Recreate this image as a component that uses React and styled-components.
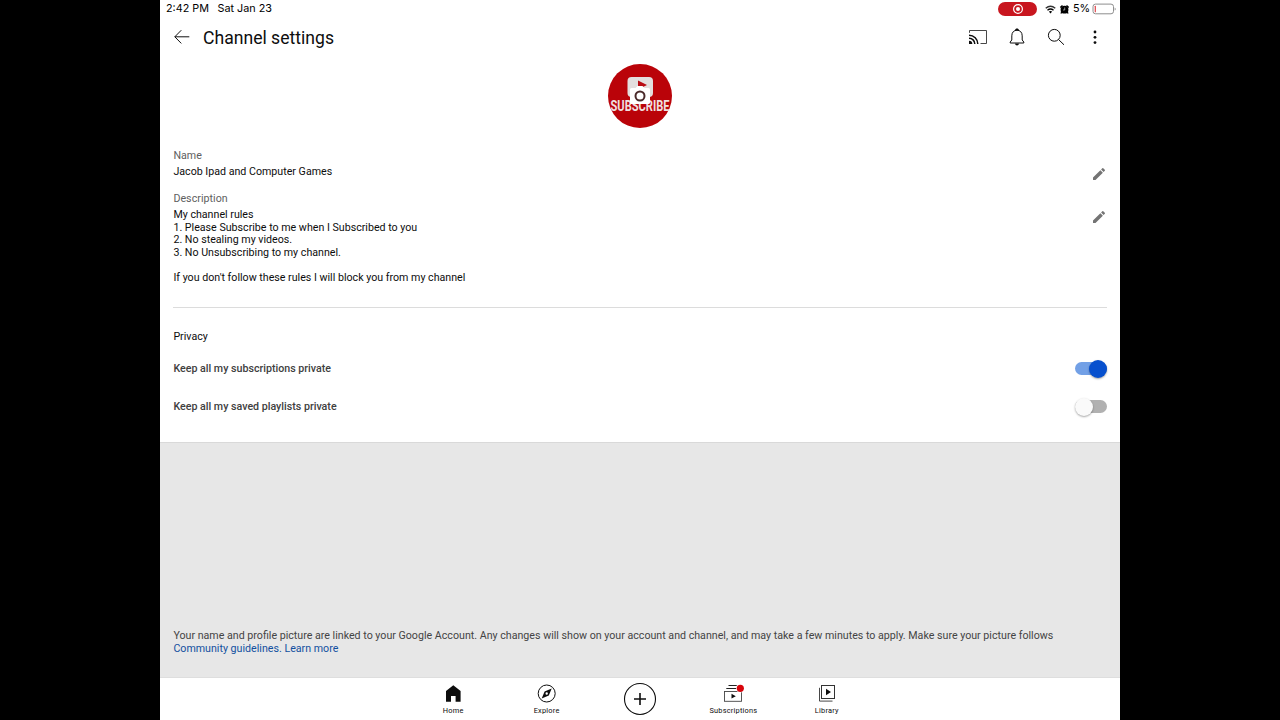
import React from "react";
import styled, { createGlobalStyle } from "styled-components";

const GlobalStyle = createGlobalStyle`
  * { box-sizing: border-box; }
  body { margin: 0; background: #000; font-family: Roboto, "Liberation Sans", sans-serif; }
  svg { display: block; flex: none; overflow: visible; }
`;

const Stage = styled.div`
  width: 1280px;
  height: 720px;
  display: flex;
  justify-content: center;
  background: #000;
  overflow: hidden;
`;

const Tablet = styled.main`
  width: 960px;
  height: 720px;
  display: flex;
  flex-direction: column;
  background: #fff;
  color: #0d0d0d;
`;

const StatusBar = styled.div`
  height: 18px;
  flex: none;
  display: flex;
  align-items: center;
  padding: 0 4px 0 6px;
  font-family: Inter, Roboto, sans-serif;
  font-size: 10.8px;
  line-height: 18px;
  color: #000;
`;

const StatusText = styled.span`
  width: ${(p) => p.$width}px;
  white-space: nowrap;
  letter-spacing: ${(p) => p.$spacing || 0}px;
`;

const Spacer = styled.div`
  flex: 1;
`;

const RecordPill = styled.div`
  width: 39px;
  height: 14px;
  margin-right: 8px;
  border-radius: 7px;
  background: #c8161f;
  display: flex;
  align-items: center;
  justify-content: center;
`;

const StatusIcons = styled.div`
  display: flex;
  align-items: center;
  gap: 4px;
`;

const Header = styled.header`
  height: 38px;
  flex: none;
  display: flex;
  align-items: center;
  padding: 0 15px 0 14px;
`;

const Title = styled.h1`
  margin: 0 0 0 13px;
  padding-top: 1px;
  flex: 1;
  font-size: 17.6px;
  line-height: 24px;
  font-weight: 400;
`;

const HeaderActions = styled.div`
  display: flex;
  align-items: center;
  gap: 19px;
`;

const AvatarRow = styled.div`
  height: 92px;
  flex: none;
  padding-top: 8px;
  display: flex;
  justify-content: center;
`;

const Field = styled.section`
  display: flex;
  justify-content: space-between;
  height: ${(p) => p.$height}px;
  flex: none;
  padding: 0 13.5px 0 13.4px;
`;

const FieldLabel = styled.div`
  font-size: 10.67px;
  line-height: 15px;
  color: #606060;
  letter-spacing: 0.04px;
`;

const FieldValue = styled.div`
  margin-top: 3px;
  font-size: 10.67px;
  line-height: 12.5px;
  white-space: pre-line;
`;

const EditButton = styled.button`
  width: 16px;
  height: 16px;
  margin-top: 18px;
  padding: 0;
  border: 0;
  background: none;
`;

const Divider = styled.hr`
  height: 1.500px;
  width: 934px;
  flex: none;
  margin: 0 0 0 13px;
  border: 0;
  background: #dcdcdc;
`;

const SectionTitle = styled.h2`
  margin: 21px 0 5.500px;
  padding-left: 13.4px;
  font-size: 10.67px;
  line-height: 15px;
  font-weight: 400;
`;

const ToggleRow = styled.div`
  height: 38px;
  flex: none;
  display: flex;
  align-items: center;
  justify-content: space-between;
  padding: 0 13px 0 13.4px;
`;

const ToggleLabel = styled.span`
  font-size: 10.67px;
  font-weight: 500;
  line-height: 15px;
  color: #404040;
`;

const Track = styled.button`
  width: 32px;
  height: 13px;
  padding: 0;
  border: 0;
  border-radius: 7px;
  display: flex;
  align-items: center;
  justify-content: ${(p) => (p.$on ? "flex-end" : "flex-start")};
  background: ${(p) => (p.$on ? "#72a0e6" : "#b1b1b1")};
`;

const Knob = styled.span`
  width: 18px;
  height: 18px;
  flex: none;
  border-radius: 50%;
  background: ${(p) => (p.$on ? "#0750ce" : "#fafafa")};
  box-shadow: 0 1px 2px rgba(0, 0, 0, 0.35);
`;

const Footer = styled.section`
  flex: 1;
  margin-top: 16px;
  border-top: 1px solid #d9d9d9;
  border-bottom: 1px solid #dedede;
  background: #e7e7e7;
  display: flex;
  align-items: flex-end;
  padding: 0 13px 22px 13.4px;
`;

const Notice = styled.p`
  margin: 0;
  font-size: 10.67px;
  line-height: 12.5px;
  color: #444;
`;

const Link = styled.span`
  color: #12509f;
`;

const TabBar = styled.nav`
  height: 42px;
  flex: none;
  display: flex;
  justify-content: center;
`;

const Tab = styled.div`
  width: 93.4px;
  display: flex;
  flex-direction: column;
  align-items: center;
  padding-top: ${(p) => (p.$large ? 5 : 6)}px;
`;

const TabLabel = styled.span`
  margin-top: 2px;
  font-size: 7.4px;
  line-height: 9px;
  letter-spacing: 0.22px;
`;

const Avatar = () => (
  <svg width="64" height="64" viewBox="0 0 64 64">
    <circle cx="32" cy="32" r="32" fill="#ba0309" />
    <rect x="19.5" y="13" width="25.5" height="20" rx="4" fill="#e3dede" />
    <path d="M30 16.500v9l9-4.500z" fill="#b90b13" />
    <text x="2.500" y="47" textLength="59" lengthAdjust="spacingAndGlyphs" fontFamily="Roboto, sans-serif" fontWeight="700" fontSize="14.500" fill="#f0e0e0">SUBSCRIBE</text>
    <path d="M23.500 24h4l2-2h5l2 2h4q1.500 0 1.500 1.500v13q0 1.500-1.500 1.500h-17q-1.500 0-1.500-1.500v-13q0-1.500 1.500-1.500z" fill="#fff" />
    <circle cx="32" cy="32" r="4.500" fill="#fff" stroke="#4a2a2a" strokeWidth="2" />
  </svg>
);

const BackIcon = () => (
  <svg width="16" height="16" viewBox="0 0 16 16" fill="none" stroke="#111" strokeWidth="1">
    <path d="M15.300 7.800H.8M7.300 1.200.8 7.800l6.500 6.600" />
  </svg>
);

const CastIcon = () => (
  <svg width="20" height="18" viewBox="0 0 20 18" fill="none" stroke="#0d0d0d">
    <path d="M1.500 4.800V2.500h17v13h-6" strokeWidth=".9" stroke="#333" />
    <path d="M1 7.200a8.800 8.800 0 0 1 8.800 8.800M1 10.200a5.800 5.800 0 0 1 5.800 5.800" strokeWidth="1.500" />
    <path d="M1 12.700a3.300 3.300 0 0 1 3.300 3.300H1z" fill="#0d0d0d" stroke="none" />
  </svg>
);

const BellIcon = () => (
  <svg width="20" height="20" viewBox="0 0 20 20" fill="none" stroke="#0d0d0d" strokeWidth="1">
    <path d="M3.200 16v-1l1.600-2V8.800C4.800 5.300 7 3.200 10 3.200s5.200 2.100 5.200 5.600V13l1.600 2v1z" />
    <path d="M8 3.500C8.200.9 11.800.9 12 3.500zM8 16.500h4c-.2 2.600-3.800 2.600-4 0z" fill="#0d0d0d" stroke="none" />
  </svg>
);

const SearchIcon = () => (
  <svg width="20" height="20" viewBox="0 0 20 20" fill="none" stroke="#0d0d0d" strokeWidth="1">
    <circle cx="8.300" cy="8.300" r="5.900" />
    <path d="m12.500 12.500 5.500 5.300" />
  </svg>
);

const MoreIcon = () => (
  <svg width="20" height="20" viewBox="0 0 20 20" fill="#0d0d0d">
    <circle cx="10" cy="5" r="1.400" />
    <circle cx="10" cy="10.300" r="1.400" />
    <circle cx="10" cy="15.600" r="1.400" />
  </svg>
);

const PencilIcon = () => (
  <svg width="16" height="16" viewBox="0 0 24 24" fill="#747474">
    <path d="M3 17.250V21h3.750L17.810 9.940l-3.750-3.750L3 17.250zM20.710 7.040a1 1 0 0 0 0-1.410l-2.340-2.340a1 1 0 0 0-1.410 0l-1.830 1.830 3.750 3.750 1.830-1.830z" />
  </svg>
);

const RecordIcon = () => (
  <svg width="10" height="10" viewBox="0 0 10 10">
    <circle cx="5" cy="5" r="4.400" fill="none" stroke="#fff" strokeWidth="1.200" />
    <circle cx="5" cy="5" r="2" fill="#fff" />
  </svg>
);

const WifiIcon = () => (
  <svg width="11" height="9" viewBox="0 0 12 9" fill="none" stroke="#000" strokeWidth="1.500">
    <path d="M.8 3.200Q6-1.200 11.200 3.200" stroke="#333" />
    <path d="M2.700 5.300Q6 2.600 9.300 5.300" />
    <path d="M4.200 6.800Q6 5.600 7.800 6.800L6 8.800z" fill="#000" stroke="none" />
  </svg>
);

const AlarmIcon = () => (
  <svg width="9" height="9" viewBox="0 0 9 9">
    <path d="M.3 2.500 2.500.4M8.700 2.500 6.500.4M1.800 7 .9 8.500M7.200 7l.9 1.500" stroke="#000" strokeWidth="1.400" />
    <circle cx="4.500" cy="4.700" r="3.900" fill="#000" />
    <path d="M4.700 2.500v2.500H3" fill="none" stroke="#ccc" strokeWidth=".7" />
  </svg>
);

const BatteryIcon = () => (
  <svg width="23" height="10" viewBox="0 0 23 10">
    <rect x="0" y=".1" width="20.500" height="9.700" rx="2.500" fill="none" stroke="#8e8e8e" />
    <path d="M21.700 3.500q1 .5 1 1.500t-1 1.500z" fill="#8e8e8e" />
    <rect x="1.700" y="1.800" width="1.200" height="6.400" rx=".5" fill="#e0474c" />
  </svg>
);

const HomeIcon = () => (
  <svg width="20" height="20" viewBox="0 0 20 20" fill="#0d0d0d">
    <path d="m10.300 1.300 7.300 5.800v10.600h-5v-5.800H8v5.800H3V7.100z" />
  </svg>
);

const ExploreIcon = () => (
  <svg width="20" height="20" viewBox="0 0 20 20">
    <circle cx="9.700" cy="9.500" r="8.500" fill="none" stroke="#0d0d0d" />
    <path fillRule="evenodd" d="m14.700 4.500-2.900 7.100-7.100 2.900 2.900-7.100zM9.700 8.300a1.200 1.200 0 1 0 0 2.400 1.200 1.200 0 0 0 0-2.400z" fill="#0d0d0d" />
  </svg>
);

const CreateIcon = () => (
  <svg width="32" height="32" viewBox="0 0 32 32" fill="none" stroke="#0d0d0d">
    <circle cx="16" cy="16" r="15.500" strokeWidth="1.100" />
    <path d="M16 10v12M10 16h12" strokeWidth="1.600" />
  </svg>
);

const SubscriptionsIcon = () => (
  <svg width="20" height="20" viewBox="0 0 20 20">
    <path d="M5.500 1.500h9M3.300 4.500h13" stroke="#222" strokeWidth="1.100" />
    <rect x="1.500" y="7.500" width="17" height="9.800" fill="#fff" stroke="#444" strokeWidth=".9" />
    <path d="M8.500 9.800v4.800l4.300-2.400z" fill="#0d0d0d" />
    <circle cx="17.300" cy="4.300" r="4.300" fill="#fff" />
    <circle cx="17.300" cy="4.300" r="3.600" fill="#d8040b" />
  </svg>
);

const LibraryIcon = () => (
  <svg width="20" height="20" viewBox="0 0 20 20" fill="none" stroke="#333">
    <rect x="4.500" y="1.500" width="13" height="13" />
    <path d="M2.500 3.800v13.300h13" strokeWidth=".9" />
    <path d="M9 4.800v6.500l5-3.250z" fill="#0d0d0d" stroke="none" />
  </svg>
);

const tabs = [
  { label: "Home", Icon: HomeIcon },
  { label: "Explore", Icon: ExploreIcon },
  { Icon: CreateIcon },
  { label: "Subscriptions", Icon: SubscriptionsIcon },
  { label: "Library", Icon: LibraryIcon },
];

const description = `My channel rules
1. Please Subscribe to me when I Subscribed to you
2. No stealing my videos.
3. No Unsubscribing to my channel.

If you don't follow these rules I will block you from my channel`;

function Toggle({ label, on }) {
  return (
    <ToggleRow>
      <ToggleLabel>{label}</ToggleLabel>
      <Track $on={on} role="switch" aria-checked={on} aria-label={label}>
        <Knob $on={on} />
      </Track>
    </ToggleRow>
  );
}

function EditableField({ label, value, height }) {
  return (
    <Field $height={height}>
      <div>
        <FieldLabel>{label}</FieldLabel>
        <FieldValue>{value}</FieldValue>
      </div>
      <EditButton aria-label={"Edit " + label}>
        <PencilIcon />
      </EditButton>
    </Field>
  );
}

export default function App() {
  return (
    <Stage>
      <GlobalStyle />
      <Tablet>
        <StatusBar>
          <StatusText $width={51.5}>2:42 PM</StatusText>
          <StatusText $width={60}>Sat Jan 23</StatusText>
          <Spacer />
          <RecordPill><RecordIcon /></RecordPill>
          <StatusIcons>
            <WifiIcon />
            <AlarmIcon />
            <StatusText $width={16}>5%</StatusText>
            <BatteryIcon />
          </StatusIcons>
        </StatusBar>
        <Header>
          <BackIcon />
          <Title>Channel settings</Title>
          <HeaderActions>
            <CastIcon />
            <BellIcon />
            <SearchIcon />
            <MoreIcon />
          </HeaderActions>
        </Header>
        <AvatarRow><Avatar /></AvatarRow>
        <EditableField label="Name" value="Jacob Ipad and Computer Games" height={43} />
        <EditableField label="Description" value={description} height={115.5} />
        <Divider />
        <SectionTitle>Privacy</SectionTitle>
        <Toggle label="Keep all my subscriptions private" on />
        <Toggle label="Keep all my saved playlists private" on={false} />
        <Footer>
          <Notice>
            Your name and profile picture are linked to your Google Account. Any changes will show on your account and channel, and may take a few minutes to apply. Make sure your picture follows <Link>Community guidelines.</Link> <Link>Learn more</Link>
          </Notice>
        </Footer>
        <TabBar>
          {tabs.map(({ label, Icon }, i) => (
            <Tab key={i} $large={!label}>
              <Icon />
              {label && <TabLabel>{label}</TabLabel>}
            </Tab>
          ))}
        </TabBar>
      </Tablet>
    </Stage>
  );
}
